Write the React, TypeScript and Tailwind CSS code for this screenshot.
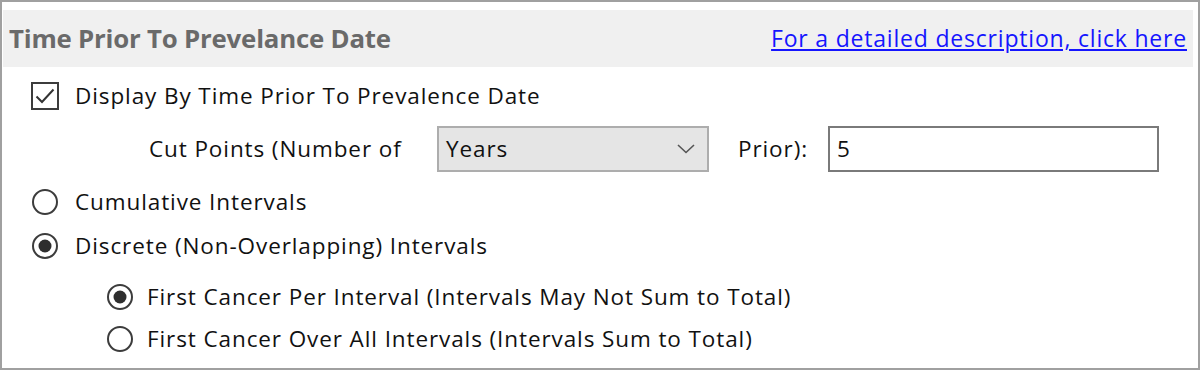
import React from 'react';

const Radio = ({ checked }: { checked?: boolean }) => (
    <svg width="28" height="28" viewBox="0 0 28 28" className="shrink-0">
        <circle cx="14" cy="14" r="12" fill="white" stroke="#3c3c3c" strokeWidth="2" />
        {checked && <circle cx="14" cy="14" r="6.5" fill="#2e2e2e" />}
    </svg>
);

const Checkbox = () => (
    <svg width="28" height="28" viewBox="0 0 28 28" className="shrink-0">
        <rect x="1" y="1" width="26" height="26" fill="white" stroke="#3c3c3c" strokeWidth="2" />
        <polyline points="5.5,14.5 11,20 22.5,7.5" fill="none" stroke="#333" strokeWidth="2" />
    </svg>
);

export default function App() {
    return (
        <div
            className="w-[1200px] h-[370px] border-2 border-[#a0a0a0] bg-white text-[#111] overflow-hidden"
            style={{ fontFamily: '"Open Sans", "Noto Sans", sans-serif' }}
        >
            {/* Header band */}
            <div className="mt-2 ml-px mr-[5px] h-[57px] bg-[#f0f0f0] flex items-center justify-between pl-[6px] pr-[6px]">
                <span className="text-[25.8px] font-bold text-[#6a6a6a] tracking-[-0.2px]">Time Prior To Prevelance Date</span>
                <a href="#" className="text-[23px] text-[#1515ff] underline underline-offset-2 decoration-[1.5px] tracking-[0.8px]">
                    For a detailed description, click here
                </a>
            </div>

            <div className="flex flex-col text-[22.5px] tracking-[0.9px]">
                <div className="h-[40px] mt-[9px] flex items-center gap-[16px] pl-[29px]">
                    <Checkbox />
                    <span>Display By Time Prior To Prevalence Date</span>
                </div>

                <div className="h-[46px] mt-[10px] flex items-center pl-[147px]">
                    <span className="w-[288px]">Cut Points (Number of</span>
                    <div className="w-[272px] h-[46px] bg-[#e5e5e5] border-2 border-[#adadad] flex items-center justify-between pl-[7px] pr-[12px]">
                        <span>Years</span>
                        <svg width="18" height="10" viewBox="0 0 18 10">
                            <polyline points="1,1 9,8.5 17,1" fill="none" stroke="#555" strokeWidth="1.6" />
                        </svg>
                    </div>
                    <span className="ml-[29px] w-[90px]">Prior):</span>
                    <div className="w-[331px] h-[46px] border-2 border-[#7a7a7a] flex items-center pl-[7px]">5</div>
                </div>

                <div className="h-[40px] mt-[10px] flex items-center gap-[16px] pl-[29px]">
                    <Radio />
                    <span>Cumulative Intervals</span>
                </div>
                <div className="h-[40px] mt-[4px] flex items-center gap-[16px] pl-[29px]">
                    <Radio checked />
                    <span>Discrete (Non-Overlapping) Intervals</span>
                </div>

                <div className="h-[40px] mt-[11px] flex items-center gap-[13px] pl-[104px]">
                    <Radio checked />
                    <span>First Cancer Per Interval (Intervals May Not Sum to Total)</span>
                </div>
                <div className="h-[40px] mt-[2px] flex items-center gap-[13px] pl-[104px]">
                    <Radio />
                    <span>First Cancer Over All Intervals (Intervals Sum to Total)</span>
                </div>
            </div>
        </div>
    );
}
